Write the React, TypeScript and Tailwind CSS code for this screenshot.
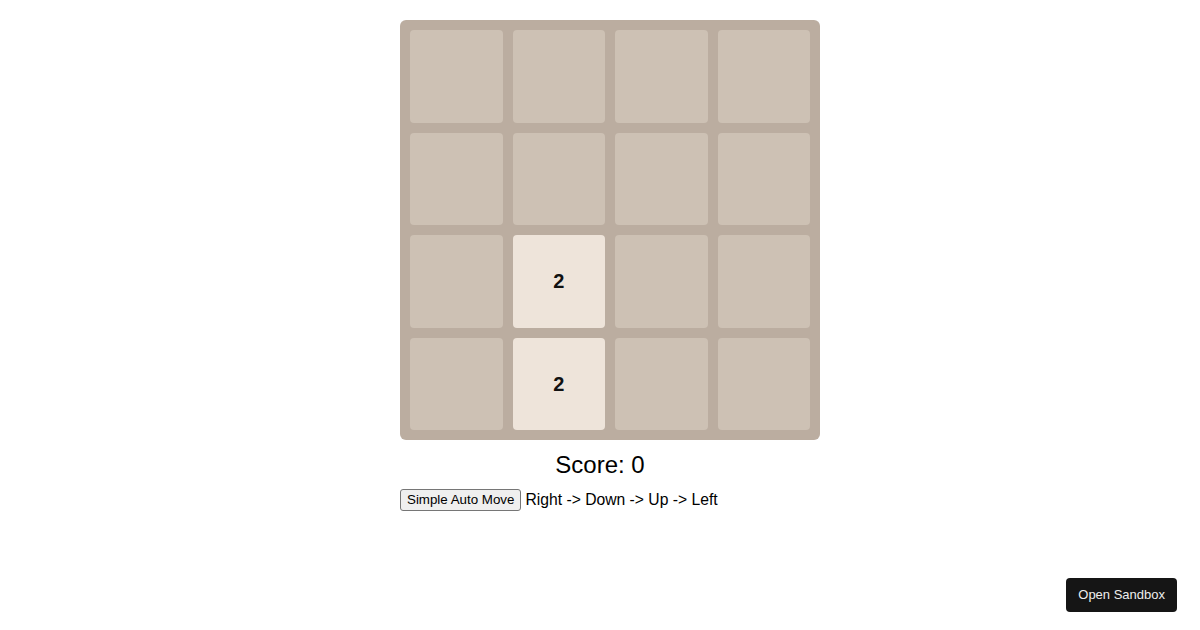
import React from "react";

const board: number[][] = [
  [0, 0, 0, 0],
  [0, 0, 0, 0],
  [0, 2, 0, 0],
  [0, 2, 0, 0],
];

function Tile({ value }: { value: number }) {
  return (
    <div
      className={
        value
          ? "flex items-center justify-center rounded-[4px] bg-[#eee4da] text-[20px] font-bold text-[#111]"
          : "rounded-[4px] bg-[#cdc1b4]"
      }
    >
      {value ? value : null}
    </div>
  );
}

export default function App() {
  return (
    <div className="min-h-[630px] bg-white font-['Liberation_Sans',Arial,sans-serif] text-black">
      <div className="mx-auto w-[400px] pt-5">
        <div className="grid w-[420px] h-[420px] grid-cols-4 grid-rows-4 gap-[10px] rounded-[6px] bg-[#bbada0] p-[10px]">
          {board.flat().map((v, i) => (
            <Tile key={i} value={v} />
          ))}
        </div>
        <div className="mt-[11px] text-center text-[24px] leading-[28px]">Score: 0</div>
        <div className="mt-[9px] flex items-center text-[15.7px]">
          <button className="h-[22px] rounded-[3px] border border-[#767676] bg-[#efefef] px-[6px] text-[13.33px] leading-none text-black">
            Simple Auto Move
          </button>
          <span className="ml-[4px]">Right -&gt; Down -&gt; Up -&gt; Left</span>
        </div>
      </div>
      <button className="fixed bottom-[18px] right-[23px] h-[34px] rounded-[4px] bg-[#151515] px-[12px] text-[13px] text-[#eee]">
        Open Sandbox
      </button>
    </div>
  );
}
